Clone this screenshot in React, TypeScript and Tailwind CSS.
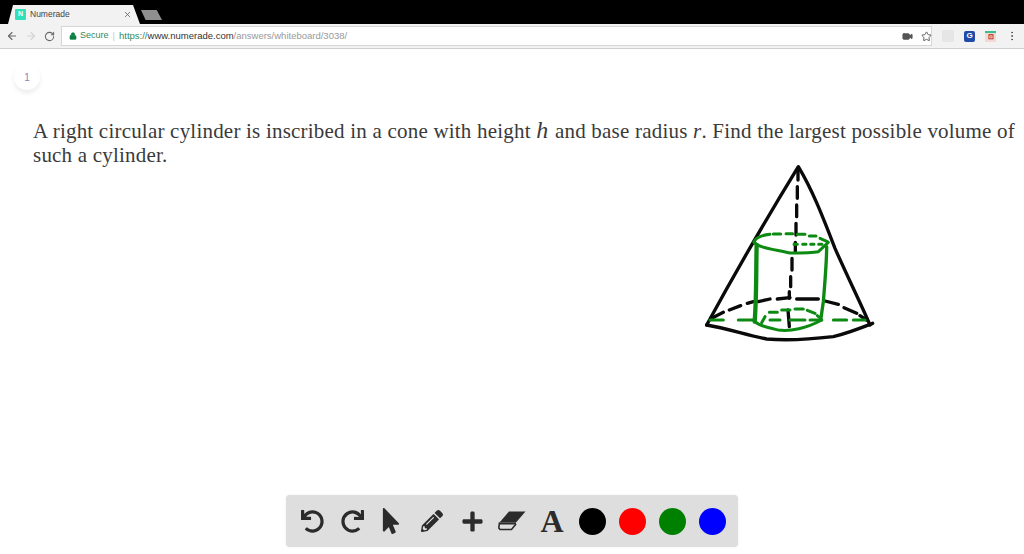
import { FaUndo, FaRedo, FaPlus, FaMousePointer, FaPencilAlt } from "react-icons/fa";
import { ArrowLeft, ArrowRight, RotateCw, Lock, Star, Video, X, EllipsisVertical } from "lucide-react";

const K = "#0a0a0a";
const G = "#0c8a12";

function Drawing() {
  return (
    <svg className="absolute left-[690px] top-[155px]" width="200" height="195" viewBox="0 0 600 585" fill="none" strokeLinecap="round" strokeLinejoin="round">
      <g stroke={K} strokeWidth="10">
        <path d="M50 510 C110 400 230 190 325 35 C370 110 400 190 435 280 C470 360 510 440 540 510" />
        <path d="M50 510 C110 520 170 540 230 552 C300 558 370 552 430 545 C470 535 510 520 548 505" />
        <path d="M324 40V75M322 95V130M320 150V185M318 205V240M316 262V290M306 310V345M302 365V395M298 410V430M294 465L298 515" />
        <path d="M65 490L100 472M118 465L152 452M172 445L190 440M205 440L240 432M262 432L300 428M320 432L385 432M405 438L445 448M462 458L500 475M510 482L530 495" />
      </g>
      <g stroke={G} strokeWidth="9">
        <path d="M192 260C200 245 220 240 240 238" />
        <path d="M250 237H272M288 236H308M322 238H345M358 243H378M390 250L412 260" />
        <path d="M312 268H322M338 268H348M362 268H372M386 268H396" />
        <path d="M192 262C210 280 250 282 300 294C330 294 365 294 385 290L415 262" />
        <path d="M200 270C198 340 200 420 194 500" strokeWidth="13" />
        <path d="M410 275C410 320 405 380 400 440L392 495" strokeWidth="10" />
        <path d="M60 495H100M145 495H190M240 495H270M300 495H345M360 495H395M430 495H470M490 495H525" />
        <path d="M195 500C210 515 240 520 265 525C300 530 350 520 395 495" />
        <path d="M215 503L225 485M238 472H262M275 465H300M315 462H340M352 466L375 475M382 482L392 490" />
      </g>
    </svg>
  );
}

function Eraser() {
  return (
    <svg width="28" height="20" viewBox="0 0 28 20" className="text-[#2b2b2b]">
      <path d="M11 0.5H27.5L18 11.5H1.5Z" fill="currentColor" />
      <path d="M1.5 11.5L0.8 17L2 18.5H13.5L18 13" fill="none" stroke="currentColor" strokeWidth="1.6" />
      <path d="M1 11.5H18V13.5H1Z" fill="currentColor" />
    </svg>
  );
}

function Tool({ children }: { children: React.ReactNode }) {
  return <div className="flex h-[40px] w-[40px] items-center justify-center text-[#2b2b2b]">{children}</div>;
}

function Dot({ c }: { c: string }) {
  return (
    <div className="flex h-[40px] w-[40px] items-center justify-center">
      <div className={`h-[27px] w-[27px] rounded-full ${c}`} />
    </div>
  );
}

export default function App() {
  return (
    <div className="relative flex h-[554px] w-[1024px] flex-col overflow-hidden bg-white font-['Liberation_Sans',sans-serif]">
      <div className="flex h-[24px] items-end bg-black pl-[8px]">
        <div className="flex h-[19px] w-[132px] items-center bg-[#f2f2f2] pl-[7px] pr-[8px] [clip-path:polygon(0_100%,5px_0,125px_0,100%_100%)]">
          <div className="flex h-[11px] w-[11px] items-center justify-center rounded-[1px] bg-[#2fe0b8] text-[7px] font-bold text-white">N</div>
          <span className="ml-[4px] flex-1 text-[8.5px] text-[#444]">Numerade</span>
          <X size={9} className="text-[#555]" strokeWidth={2} />
        </div>
        <div className="mb-[4px] ml-[1px] h-[10px] w-[21px] bg-[#8f8f8f] [clip-path:polygon(0_0,75%_0,100%_100%,22%_100%)]" />
      </div>
      <div className="flex h-[25px] items-center border-b border-[#cfcfcf] bg-[#f2f2f2] pl-[6px]">
        <ArrowLeft size={12} className="text-[#666]" strokeWidth={2.2} />
        <ArrowRight size={12} className="ml-[7px] text-[#d4d4d4]" strokeWidth={2.2} />
        <RotateCw size={11} className="ml-[7px] text-[#666]" strokeWidth={2.2} />
        <div className="ml-[6px] flex h-[20px] w-[871px] items-center border border-[#d6d6d6] bg-white pl-[7px] text-[9.5px]">
          <Lock size={8} className="fill-[#0b8043] text-[#0b8043]" />
          <span className="ml-[3px] text-[9px] text-[#2f8a62]">Secure</span>
          <span className="ml-[4px] text-[#ccc]">|</span>
          <span className="ml-[4px] text-[#2f8a62]">https://</span>
          <span className="text-[#333]">www.numerade.com</span>
          <span className="text-[#999]">/answers/whiteboard/3038/</span>
          <Video size={11} className="ml-auto fill-[#555] text-[#555]" />
          <Star size={11} className="ml-[8px] mr-[-1px] text-[#555]" />
        </div>
        <div className="ml-[10px] h-[12px] w-[12px] rounded-[1px] bg-[#e6e6e6]" />
        <div className="ml-[10px] flex h-[11px] w-[11px] items-center justify-center rounded-[2px] bg-[#1f4aa8] text-[8px] font-bold text-white">G</div>
        <div className="ml-[10px] flex h-[11px] w-[11px] items-center justify-center border-t-2 border-[#3cc08a] bg-[#f4d7d7] text-[7px] font-bold text-[#a01c2c]">⊡</div>
        <EllipsisVertical size={12} className="ml-[10px] text-[#555]" />
      </div>

      <div className="flex flex-1 flex-col">
        <div className="ml-[14px] mt-[15px] flex h-[26px] w-[26px] items-center justify-center rounded-full bg-white text-[10px] text-[#8c82c0] shadow-[0_3px_5px_rgba(0,0,0,0.08)]">1</div>
        <p className="ml-[33px] mt-[29px] w-[990px] font-['Liberation_Serif',serif] text-[21px] leading-[24px] tracking-[0.21px] text-[#3a3a3a]">
          A right circular cylinder is inscribed in a cone with height <i className="pr-[1px] text-[24px] leading-[0]">h</i> and base radius <i>r</i>. Find the largest possible volume of such a cylinder.
        </p>
      </div>

      <Drawing />

      <div className="mx-auto mb-[7px] flex h-[52px] w-[452px] items-center rounded-[4px] bg-[#dedede] pl-[6px] shadow-[0_0_2px_rgba(0,0,0,0.1)]">
        <Tool><FaUndo size={23} /></Tool>
        <Tool><FaRedo size={23} /></Tool>
        <Tool><FaMousePointer size={26} className="ml-[-3px]" /></Tool>
        <Tool><FaPencilAlt size={22} /></Tool>
        <Tool><FaPlus size={23} /></Tool>
        <Tool><Eraser /></Tool>
        <Tool><span className="font-['Liberation_Serif',serif] text-[32px] font-bold leading-none">A</span></Tool>
        <Dot c="bg-black" />
        <Dot c="bg-[#ff0000]" />
        <Dot c="bg-[#008000]" />
        <Dot c="bg-[#0000ff]" />
      </div>
    </div>
  );
}
